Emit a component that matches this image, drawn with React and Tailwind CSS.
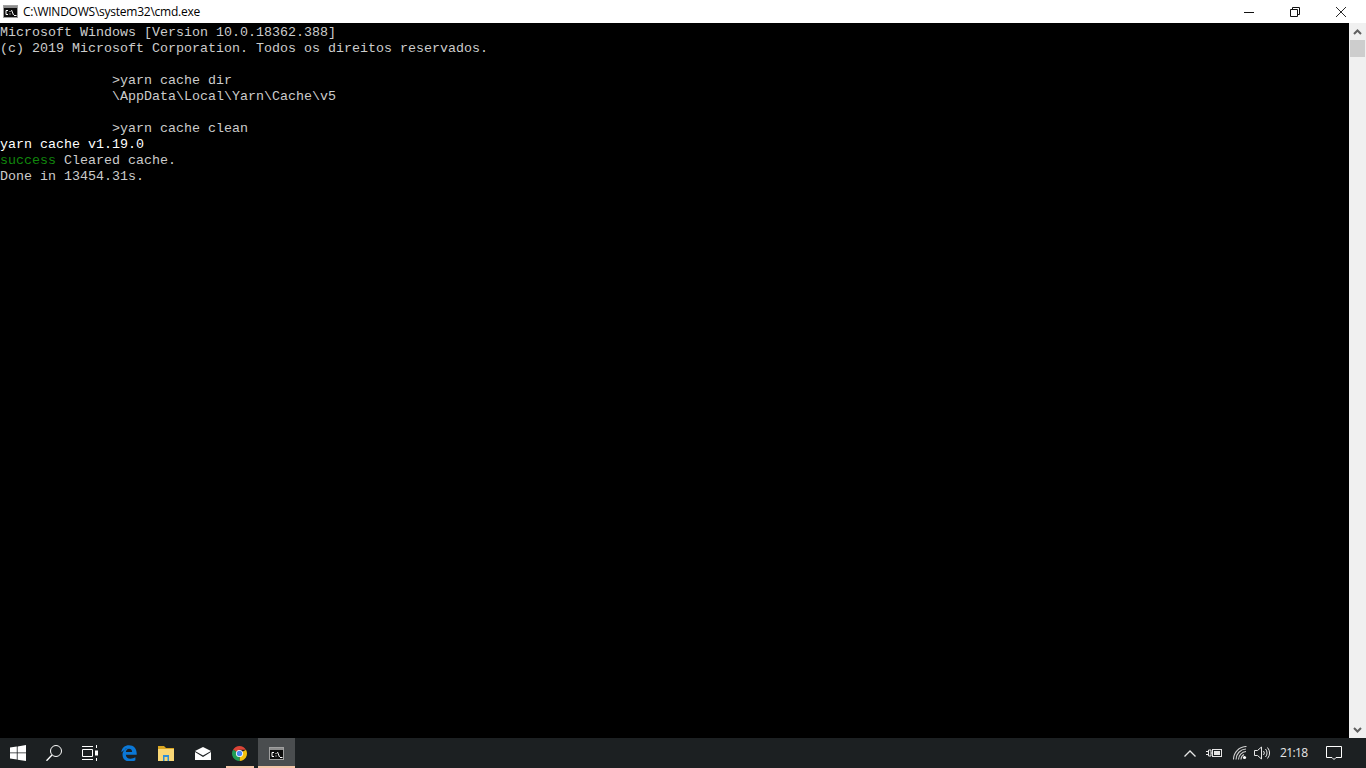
import React from 'react';

const lines = [
  { text: 'Microsoft Windows [Version 10.0.18362.388]' },
  { text: '(c) 2019 Microsoft Corporation. Todos os direitos reservados.' },
  { text: ' ' },
  { text: '              >yarn cache dir' },
  { text: '              \\AppData\\Local\\Yarn\\Cache\\v5' },
  { text: ' ' },
  { text: '              >yarn cache clean' },
  { text: 'yarn cache v1.19.0', bright: true },
  { text: ' Cleared cache.', prefix: 'success' },
  { text: 'Done in 13454.31s.' },
];

function CmdIcon({ className }) {
  return (
    <svg viewBox="0 0 15 13" className={className}>
      <rect x="0.5" y="0.5" width="14" height="12" fill="#0c0c0c" stroke="#a0a0a0" />
      <rect x="1" y="1" width="13" height="2" fill="#8c8c8c" />
      <path d="M5 5.500H3V9.500H5M7 6V7M7 8.500V9.500M8.500 5L10.500 10M11 10.500H13.500" stroke="#fff" fill="none" />
    </svg>
  );
}

function TitleBar() {
  return (
    <div className="flex h-[23px] shrink-0 items-center bg-white">
      <CmdIcon className="ml-[3px] h-[13px] w-[15px]" />
      <span className="ml-[5px] font-['Open_Sans',sans-serif] text-[12px] tracking-[-0.24px] text-black">
        C:\WINDOWS\system32\cmd.exe
      </span>
      <div className="ml-auto mr-[2px] flex h-full">
        <div className="flex w-[46px] items-center justify-center">
          <svg viewBox="0 0 10 10" className="h-[10px] w-[10px]"><path d="M0 5.500H10" stroke="#111" /></svg>
        </div>
        <div className="flex w-[46px] items-center justify-center">
          <svg viewBox="0 0 10 10" className="h-[10px] w-[10px]"><path d="M.5 2.500H7.500V9.500H.5ZM2.500 2.500V.5H9.500V7.500H7.500" stroke="#111" fill="none" /></svg>
        </div>
        <div className="flex w-[46px] items-center justify-center">
          <svg viewBox="0 0 10 10" className="h-[10px] w-[10px]"><path d="M0 0L10 10M10 0L0 10" stroke="#111" strokeWidth="0.9" /></svg>
        </div>
      </div>
    </div>
  );
}

function Scrollbar() {
  return (
    <div className="flex w-[17px] shrink-0 flex-col bg-[#f0f0f0]">
      <div className="flex h-[17px] items-center justify-center">
        <svg viewBox="0 0 9 6" className="h-[6px] w-[9px]"><path d="M1 5L4.500 1.500L8 5" stroke="#606060" strokeWidth="2" fill="none" /></svg>
      </div>
      <div className="mx-px h-[17px] bg-[#cdcdcd]" />
      <div className="mt-auto flex h-[17px] items-center justify-center">
        <svg viewBox="0 0 9 6" className="h-[6px] w-[9px]"><path d="M1 1L4.500 4.500L8 1" stroke="#606060" strokeWidth="2" fill="none" /></svg>
      </div>
    </div>
  );
}

function Console() {
  return (
    <div className="min-w-0 flex-1 bg-black pt-[2px] font-['Liberation_Mono',monospace] text-[13.33px] leading-4 text-[#cccccc]">
      {lines.map((line, i) => (
        <div key={i} className={`h-4 whitespace-pre ${line.bright ? 'text-white' : ''}`}>
          {line.prefix && <span className="text-[#11870d]">{line.prefix}</span>}
          {line.text}
        </div>
      ))}
    </div>
  );
}

function Edge() {
  return (
    <svg viewBox="0 0 16 16" className="h-[16px] w-[16px]">
      <path
        d="M.3 7.200C.8 2.800 4 .2 8 .2c4.700 0 7.700 3.300 7.700 8.400v1.200H4.800c.2 2.600 2.200 3.900 4.600 3.900 2 0 3.500-.5 5-1.400v3c-1.500.8-3.300 1.300-5.500 1.300-4.300 0-7.400-2.700-7.400-6.900 0-1.700.6-3.200 1.800-4.500C4 3.700 5.500 3 7 3 5 3.600 3.300 5.100 .3 7.200ZM4.900 6.900h6.200C11 4.900 9.900 3.700 8 3.700c-1.700 0-2.900 1.300-3.100 3.200Z"
        fill="#0b78d7"
        fillRule="evenodd"
      />
    </svg>
  );
}

function Folder() {
  return (
    <svg viewBox="0 0 16 16" className="h-[16px] w-[16px]">
      <path d="M0 1H6L8 3H16V6H0Z" fill="#d9a521" />
      <rect x="0" y="4" width="16" height="12" fill="#f9d776" />
      <path d="M5 10H11V16H9.500V12H6.500V16H5Z" fill="#2f8fd8" />
    </svg>
  );
}

function Chrome() {
  return (
    <svg viewBox="0 0 16 16" className="h-[15px] w-[15px]">
      <path d="M8 8L1.100 4A8 8 0 0 1 14.900 4H8Z" fill="#dc4437" />
      <path d="M8 8L14.900 4A8 8 0 0 1 8 16Z" fill="#f4c20d" />
      <path d="M8 8V16A8 8 0 0 1 1.100 4Z" fill="#1f9d55" />
      <circle cx="8" cy="8" r="3.800" fill="#fff" />
      <circle cx="8" cy="8" r="2.900" fill="#4a8af4" />
    </svg>
  );
}

function TaskButton({ children, className = '', width = 'w-[37px]' }) {
  return <div className={`flex h-full shrink-0 items-center justify-center ${width} ${className}`}>{children}</div>;
}

function Taskbar() {
  return (
    <div className="flex h-[30px] shrink-0 bg-[#1c2022] text-white">
      <TaskButton width="w-9">
        <svg viewBox="0 0 16 16" className="h-4 w-4" fill="#fff">
          <path d="M0 2.500L6.800 1.500V7.500H0ZM7.600 1.400L16 0V7.500H7.600ZM0 8.300H6.800V14.500L0 13.500ZM7.600 8.300H16V16L7.600 14.700Z" />
        </svg>
      </TaskButton>
      <TaskButton width="w-9">
        <svg viewBox="0 0 16 16" className="h-4 w-4" fill="none" stroke="#fff">
          <circle cx="10" cy="6" r="5.500" />
          <path d="M6 10L.5 15.800" strokeWidth="1.300" />
        </svg>
      </TaskButton>
      <TaskButton width="w-9">
        <svg viewBox="0 0 16 16" className="h-4 w-4" fill="none" stroke="#fff">
          <path d="M0 1.500H11M0 14.500H11M.5 4.500H10.500V11.500H.5ZM14.500 0V3M14.500 13V16" />
          <rect x="13" y="5.500" width="3" height="5" fill="#fff" stroke="none" />
        </svg>
      </TaskButton>
      <TaskButton className="ml-[2px]"><Edge /></TaskButton>
      <TaskButton><Folder /></TaskButton>
      <TaskButton>
        <svg viewBox="0 0 16 13" className="h-[13px] w-4">
          <path d="M0 4L8 0L16 4L8 8.500Z" fill="#fff" />
          <path d="M0 5L8 10L16 5V13H0Z" fill="#fff" />
        </svg>
      </TaskButton>
      <TaskButton className="relative">
        <Chrome />
        <div className="absolute bottom-0 left-[5px] right-[4px] h-[2px] bg-[#f5c6a8]" />
      </TaskButton>
      <TaskButton className="relative bg-[#4a4d4f]">
        <CmdIcon className="h-[13px] w-[15px]" />
        <div className="absolute inset-x-0 bottom-0 h-[2px] bg-[#f5c6a8]" />
      </TaskButton>

      <div className="ml-auto flex h-full items-center">
        <svg viewBox="0 0 12 7" className="h-[7px] w-[12px]" fill="none" stroke="#e6e6e6" strokeWidth="1.300"><path d="M.5 6.500L6 1L11.500 6.500" /></svg>
        <svg viewBox="0 0 16 12" className="ml-[10px] h-[12px] w-4" fill="none" stroke="#e6e6e6">
          <path d="M0 4.500H2M0 7.500H2M2.500 3V9H5V3ZM5 6H6.500" />
          <rect x="6.500" y="2.500" width="9" height="7" />
          <rect x="8" y="4" width="6" height="4" fill="#e6e6e6" stroke="none" />
        </svg>
        <svg viewBox="0 0 14 14" className="ml-[11px] h-[14px] w-[14px]" fill="none" stroke="#d0d0d0" strokeWidth="1.100">
          <path d="M.5 13.500A13 13 0 0 1 13.500 .5M3 13.500A10.500 10.500 0 0 1 13 3M5.500 13.500A8 8 0 0 1 13 5.500M8 13.500A5.500 5.500 0 0 1 11 8.500" />
          <circle cx="11.500" cy="11.500" r="1.600" fill="#fff" stroke="none" />
        </svg>
        <svg viewBox="0 0 16 14" className="ml-[7px] h-[14px] w-4" fill="none" stroke="#e6e6e6">
          <path d="M.5 4.500H3.500L7.500 1V13L3.500 9.500H.5Z" />
          <path d="M9.500 5A3 3 0 0 1 9.500 9M11.500 3A6 6 0 0 1 11.500 11M13.500 1.500A9 9 0 0 1 13.500 12.500" />
        </svg>
        <span className="ml-[10px] w-[27px] whitespace-nowrap font-['Open_Sans',sans-serif] text-[12px] tracking-[-0.6px] text-[#e6e6e6]">21:18</span>
        <div className="ml-[6px] mr-3 flex h-full w-[41px] items-center justify-center">
          <svg viewBox="0 0 16 16" className="h-4 w-4" fill="none" stroke="#fff">
            <path d="M.5 1.500H15.500V12.500H10L8 14.500L6 12.500H.5Z" />
          </svg>
        </div>
      </div>
    </div>
  );
}

export default function App() {
  return (
    <div className="flex h-screen w-full flex-col overflow-hidden bg-black">
      <TitleBar />
      <div className="flex min-h-0 flex-1">
        <Console />
        <Scrollbar />
      </div>
      <Taskbar />
    </div>
  );
}
